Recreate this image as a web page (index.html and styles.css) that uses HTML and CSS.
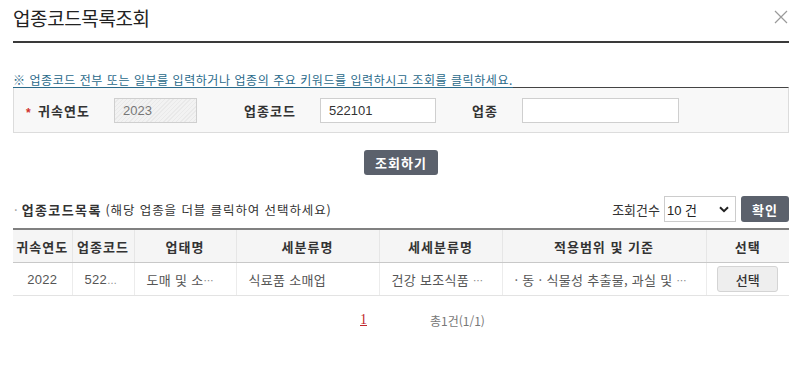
FILE: index.html
```html
<!DOCTYPE html>
<html lang="ko">
<head>
<meta charset="utf-8">
<title>업종코드목록조회</title>
<link rel="stylesheet" href="styles.css">
</head>
<body>
<div class="modal">
  <div class="header">
    <h1 class="title">업종코드목록조회</h1>
    <svg class="close" width="14" height="14" viewBox="0 0 14 14"><path d="M1 1L13 13M13 1L1 13" stroke="#9a9a9a" stroke-width="1.2" fill="none"/></svg>
  </div>
  <p class="notice">※ 업종코드 전부 또는 일부를 입력하거나 업종의 주요 키워드를 입력하시고 조회를 클릭하세요.</p>
  <div class="search-box">
    <span class="star">*</span>
    <span class="label label-year">귀속연도</span>
    <div class="input input-year disabled">2023</div>
    <span class="label label-code">업종코드</span>
    <div class="input input-code">522101</div>
    <span class="label label-name">업종</span>
    <div class="input input-name"></div>
  </div>
  <div class="search-actions">
    <button class="btn btn-search">조회하기</button>
  </div>
  <div class="list-head">
    <div class="list-title"><span class="bullet">·</span><strong>업종코드목록</strong> <span class="hint">(해당 업종을 더블 클릭하여 선택하세요)</span></div>
    <div class="list-tools">
      <span class="count-label">조회건수</span>
      <div class="select"><span>10 건</span><svg width="10" height="7" viewBox="0 0 10 7"><path d="M1 1.2L5 5.2L9 1.2" stroke="#222" stroke-width="2" fill="none"/></svg></div>
      <button class="btn btn-ok">확인</button>
    </div>
  </div>
  <table class="grid">
    <colgroup>
      <col class="c1"><col class="c2"><col class="c3"><col class="c4"><col class="c5"><col class="c6"><col class="c7">
    </colgroup>
    <thead>
      <tr><th>귀속연도</th><th>업종코드</th><th>업태명</th><th>세분류명</th><th>세세분류명</th><th>적용범위 및 기준</th><th>선택</th></tr>
    </thead>
    <tbody>
      <tr>
        <td class="center num">2022</td>
        <td class="num">522<span class="ell">…</span></td>
        <td>도매 및 소<span class="ell">…</span></td>
        <td>식료품 소매업</td>
        <td>건강 보조식품 <span class="ell">…</span></td>
        <td>· 동 · 식물성 추출물, 과실 및 <span class="ell">…</span></td>
        <td class="center"><button class="btn-select">선택</button></td>
      </tr>
    </tbody>
  </table>
  <div class="paging">
    <a class="page-num">1</a>
    <span class="total">총1건(1/1)</span>
  </div>
</div>
</body>
</html>
```
FILE: styles.css
```css
html, body {
  margin: 0;
  padding: 0;
  background: #fff;
}
body {
  font-family: "Noto Sans CJK KR", "Noto Sans", sans-serif;
  color: #333;
}
.modal {
  padding: 0 11px 0 13px;
}
.header {
  height: 36px;
  padding-bottom: 5px;
  border-bottom: 2px solid #3a3a3a;
  display: flex;
  align-items: center;
  justify-content: space-between;
}
.title {
  margin: 0;
  font-size: 19px;
  font-weight: 400;
  color: #222;
  letter-spacing: -0.4px;
  line-height: 24px;
}
.close {
  align-self: flex-start;
  margin-top: 10px;
  margin-right: 1px;
}
.notice {
  margin: 29px 0 0;
  font-size: 12px;
  line-height: 15px;
  color: #2a6a8a;
  letter-spacing: 0.55px;
  text-decoration: underline;
  text-underline-offset: 2px;
}
.search-box {
  display: flex;
  align-items: center;
  height: 44px;
  padding: 0 0 0 11px;
  background: #f8f8f8;
  border: 1px solid #dcdcdc;
  border-top: 1px solid #444;
}
.star {
  color: #d0312d;
  font-family: "Liberation Sans", sans-serif;
  font-size: 12px;
  font-weight: 700;
  width: 13px;
  padding-top: 5px;
  padding-left: 1px;
  box-sizing: border-box;
}
.label {
  font-size: 13px;
  font-weight: 700;
  color: #333;
  letter-spacing: 1px;
}
.label-year { width: 76px; }
.label-code { margin-left: 47px; width: 76px; }
.label-name { margin-left: 36px; width: 50px; }
.input {
  height: 23px;
  border: 1px solid #cfcfcf;
  background: #fff;
  font-family: "Liberation Sans", Arial, sans-serif;
  font-size: 13px;
  line-height: 23px;
  color: #333;
  padding-left: 8px;
}
.input-year { width: 73px; }
.input-code { width: 106px; }
.input-name { width: 147px; }
.disabled {
  color: #777;
  background: repeating-linear-gradient(135deg, #f2f2f2 0 2px, #e9e9e9 2px 3px);
}
.search-actions {
  display: flex;
  justify-content: center;
  margin-top: 17px;
}
.btn {
  border: none;
  border-radius: 3px;
  background: #5b616c;
  color: #fff;
  font-family: "Noto Sans CJK KR", sans-serif;
  font-size: 13px;
  font-weight: 700;
  letter-spacing: 1px;
  height: 25px;
  padding: 0;
  cursor: pointer;
}
.btn-search {
  width: 74px;
}
.list-head {
  margin-top: 21px;
  height: 26px;
  display: flex;
  align-items: center;
  justify-content: space-between;
}
.list-title {
  font-size: 13px;
  color: #333;
}
.bullet {
  color: #999;
  margin-right: 4px;
  margin-left: 1px;
}
.list-title strong {
  letter-spacing: 1.4px;
}
.hint {
  font-size: 12.5px;
  letter-spacing: 0.9px;
}
.list-tools {
  display: flex;
  align-items: center;
  height: 26px;
}
.count-label {
  font-size: 13px;
  color: #333;
  margin-right: 4px;
}
.select {
  width: 62px;
  height: 24px;
  border: 1px solid #ccc;
  background: #fff;
  display: flex;
  align-items: center;
  justify-content: space-between;
  padding: 0 6px 0 2px;
  font-size: 13px;
  color: #222;
}
.select span {
  font-family: "Liberation Sans", "Noto Sans CJK KR", sans-serif;
}
.btn-ok {
  width: 48px;
  height: 26px;
  margin-left: 5px;
}
.grid {
  margin-top: 6px;
  width: 776px;
  table-layout: fixed;
  border-collapse: collapse;
  font-size: 13px;
}
.c1 { width: 59px; }
.c2 { width: 62px; }
.c3 { width: 102px; }
.c4 { width: 143px; }
.c5 { width: 123px; }
.c6 { width: 204px; }
.c7 { width: 83px; }
.grid thead tr {
  border-top: 2px solid #808080;
}
.grid th {
  height: 32px;
  background: #f5f5f5;
  font-weight: 700;
  color: #333;
  letter-spacing: 1px;
  border-bottom: 1px solid #c8c8c8;
  border-left: 1px solid #e6e6e6;
  padding: 0;
  white-space: nowrap;
}
.grid th:first-child, .grid td:first-child {
  border-left: none;
}
.grid td {
  height: 32px;
  padding: 0 0 0 12px;
  color: #555;
  border-bottom: 1px solid #e3e3e3;
  border-left: 1px solid #ececec;
  white-space: nowrap;
  overflow: hidden;
  letter-spacing: 0.3px;
}
.grid td.center {
  text-align: center;
  padding: 0;
}
.num {
  font-family: "Liberation Sans", Arial, sans-serif;
}
.ell {
  font-size: 10px;
  color: #888;
}
.btn-select {
  width: 61px;
  height: 26px;
  border: 1px solid #d4d4d4;
  border-radius: 3px;
  background: #eeeeee;
  font-family: "Noto Sans CJK KR", sans-serif;
  font-size: 13px;
  font-weight: 500;
  color: #333;
  padding: 0;
}
.paging {
  display: flex;
  align-items: center;
  margin-top: 16px;
  padding-left: 347px;
  height: 16px;
}
.page-num {
  font-family: "Liberation Serif", serif;
  font-size: 14px;
  color: #c0282d;
  text-decoration: underline;
  width: 70px;
}
.total {
  font-size: 12px;
  color: #777;
}
```
